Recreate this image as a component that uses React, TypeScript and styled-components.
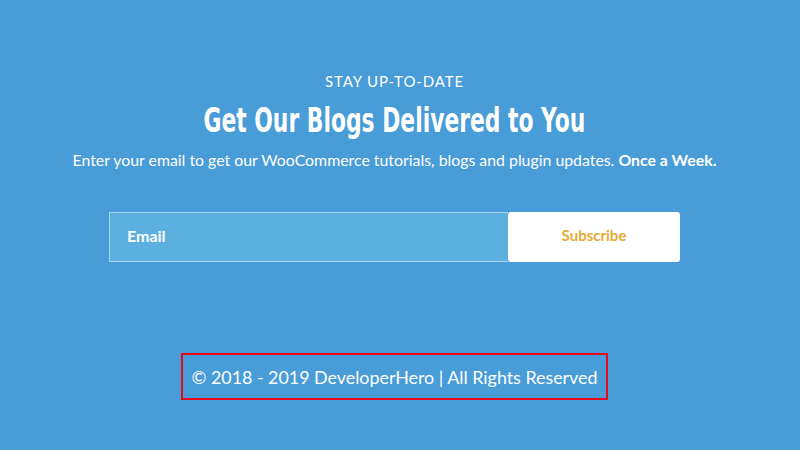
import styled, { createGlobalStyle } from 'styled-components';

const GlobalStyle = createGlobalStyle`
  html, body {
    margin: 0;
    padding: 0;
    background: #489cd8;
  }
  * {
    box-sizing: border-box;
  }
`;

const Page = styled.section`
  width: 800px;
  height: 450px;
  background: #489cd8;
  color: #ffffff;
  display: flex;
  flex-direction: column;
  align-items: center;
  padding: 71px 11px 0 0;
  font-family: Lato, "Open Sans", sans-serif;
`;

const Eyebrow = styled.div`
  font-size: 15px;
  line-height: 20px;
  letter-spacing: 0.9px;
  text-transform: uppercase;
`;

const Title = styled.h2`
  margin: 10px 0 0;
  font-family: "DejaVu Sans Condensed", "DejaVu Sans", sans-serif;
  font-weight: 700;
  font-size: 33px;
  line-height: 40px;
  transform: scaleX(0.736);
  white-space: nowrap;
`;

const Lead = styled.p`
  margin: 9px 0 0;
  font-size: 15.85px;
  line-height: 20px;
  white-space: nowrap;

  strong {
    font-weight: 700;
  }
`;

const Form = styled.form`
  display: flex;
  margin-top: 42px;
  width: 571px;
  height: 50px;
`;

const EmailInput = styled.input`
  flex: 1;
  height: 100%;
  background: #5cb0e0;
  border: 1px solid #a6d4f0;
  border-right: none;
  padding: 0 17px 4px;
  color: #ffffff;
  font-family: Lato, "Open Sans", sans-serif;
  font-size: 16px;
  font-weight: 700;
  outline: none;

  &::placeholder {
    color: #ffffff;
    opacity: 1;
  }
`;

const SubscribeButton = styled.button`
  width: 172px;
  height: 100%;
  background: #ffffff;
  border: none;
  border-radius: 3px;
  padding: 0 0 4px;
  color: #e8ab35;
  font-family: Lato, "Open Sans", sans-serif;
  font-size: 15px;
  font-weight: 700;
  cursor: pointer;
`;

const Footer = styled.footer`
  margin-top: 91px;
  border: 2px solid #e8091b;
  padding: 0 9px;
  height: 47px;
  display: flex;
  align-items: center;
  font-size: 17.85px;
`;

export default function App() {
  return (
    <>
      <GlobalStyle />
      <Page>
        <Eyebrow>Stay up-to-date</Eyebrow>
        <Title>Get Our Blogs Delivered to You</Title>
        <Lead>
          Enter your email to get our WooCommerce tutorials, blogs and plugin updates.{' '}
          <strong>Once a Week.</strong>
        </Lead>
        <Form onSubmit={(e) => e.preventDefault()}>
          <EmailInput type="email" placeholder="Email" />
          <SubscribeButton type="submit">Subscribe</SubscribeButton>
        </Form>
        <Footer>© 2018 - 2019 DeveloperHero | All Rights Reserved</Footer>
      </Page>
    </>
  );
}
